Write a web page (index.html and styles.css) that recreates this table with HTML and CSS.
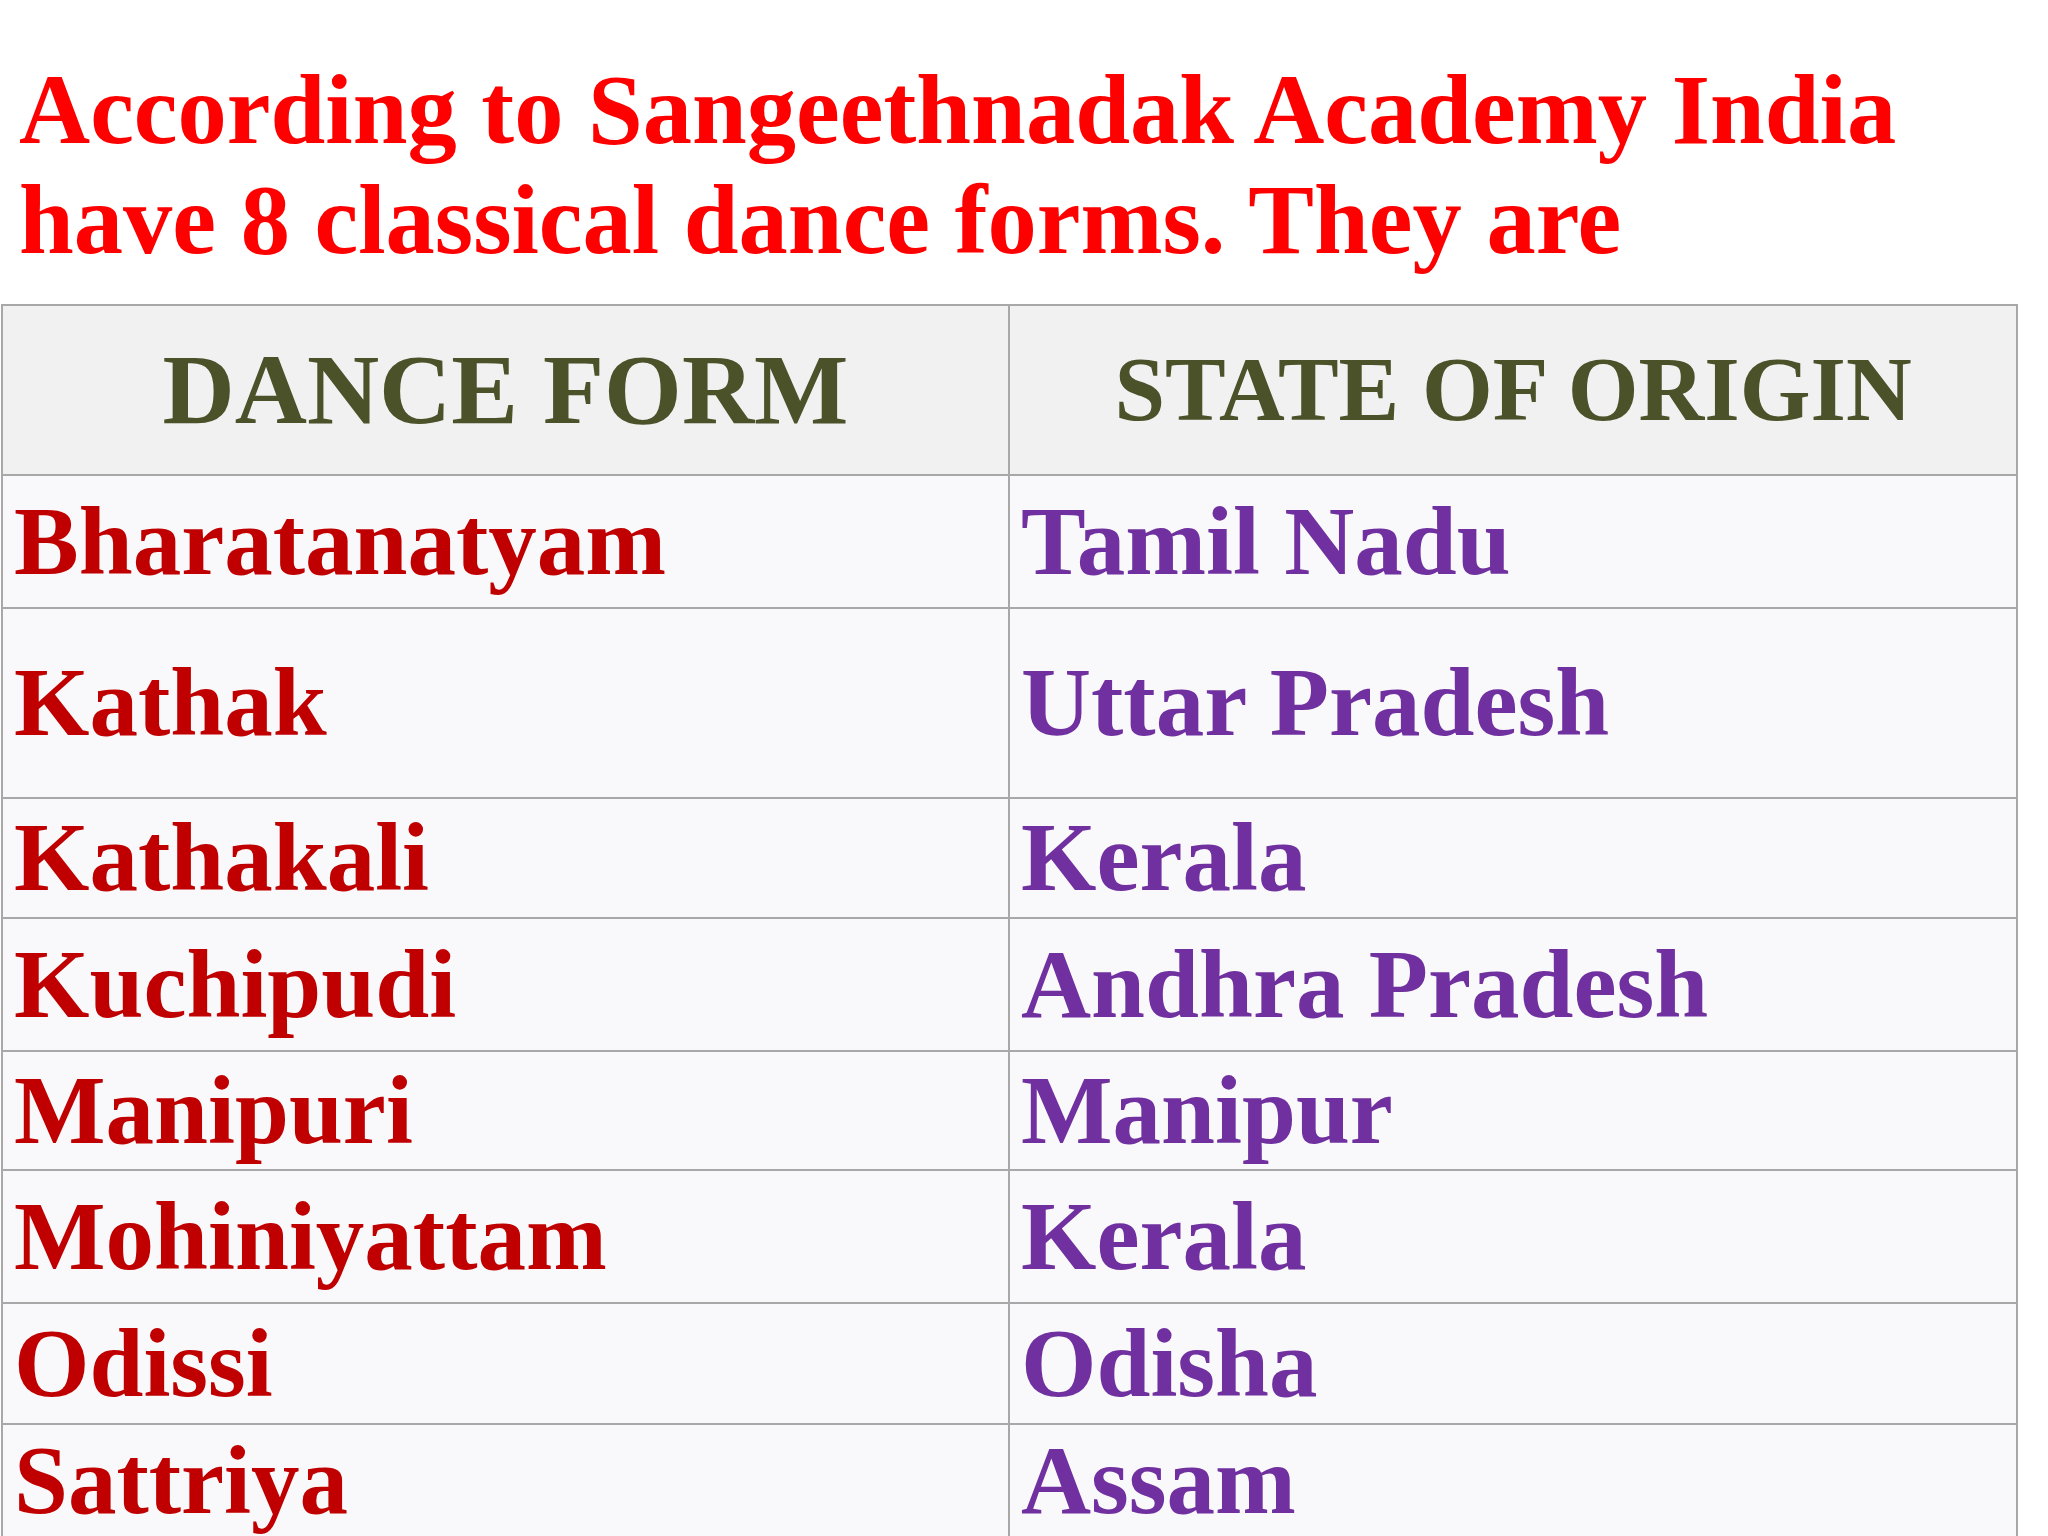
FILE: index.html
```html
<!DOCTYPE html>
<html lang="en">
<head>
<meta charset="utf-8">
<title>Classical Dance Forms of India</title>
<link rel="stylesheet" href="styles.css">
</head>
<body>
<div class="slide">
  <h1 class="title">According to Sangeethnadak Academy India<br>have 8 classical dance forms. They are</h1>
  <table class="dances">
    <colgroup><col class="c1"><col class="c2"></colgroup>
    <thead>
      <tr class="head"><th class="h-form">DANCE FORM</th><th class="h-state">STATE OF ORIGIN</th></tr>
    </thead>
    <tbody>
      <tr class="r1"><td class="form">Bharatanatyam</td><td class="state">Tamil Nadu</td></tr>
      <tr class="r2"><td class="form">Kathak</td><td class="state">Uttar Pradesh</td></tr>
      <tr class="r3"><td class="form">Kathakali</td><td class="state">Kerala</td></tr>
      <tr class="r4"><td class="form">Kuchipudi</td><td class="state">Andhra Pradesh</td></tr>
      <tr class="r5"><td class="form">Manipuri</td><td class="state">Manipur</td></tr>
      <tr class="r6"><td class="form">Mohiniyattam</td><td class="state">Kerala</td></tr>
      <tr class="r7"><td class="form">Odissi</td><td class="state">Odisha</td></tr>
      <tr class="r8"><td class="form">Sattriya</td><td class="state">Assam</td></tr>
    </tbody>
  </table>
</div>
</body>
</html>
```
FILE: styles.css
```css
html, body {
  margin: 0;
  padding: 0;
  background: #ffffff;
}
body {
  font-family: "Liberation Serif", "Times New Roman", serif;
  width: 2048px;
  height: 1536px;
  overflow: hidden;
}
.slide {
  padding-top: 55px;
}
.title {
  margin: 0 0 29px 19px;
  font-size: 98.5px;
  line-height: 110px;
  font-weight: bold;
  color: #ff0000;
  white-space: nowrap;
}
.dances {
  border-collapse: collapse;
  table-layout: fixed;
  width: 2015px;
  margin-left: 1px;
}
.c1 { width: 1007px; }
.c2 { width: 1008px; }
.dances th,
.dances td {
  border: 2px solid #a8a8a8;
  padding: 0 11px;
  vertical-align: middle;
  font-weight: bold;
  white-space: nowrap;
  overflow: hidden;
}
.dances th {
  background: #f2f1f2;
  color: #4b5229;
  line-height: 110px;
  text-align: center;
}
.h-form { font-size: 100px; }
.h-state { font-size: 91px; }
.dances td {
  background: #f9f8fa;
  font-size: 97px;
  line-height: 110px;
  text-align: left;
}
.form { color: #c00000; }
.state { color: #7030a0; }
.head { height: 170px; }
.r1 { height: 133px; }
.r2 { height: 190px; }
.r3 { height: 120px; }
.r4 { height: 133px; }
.r5 { height: 119px; }
.r6 { height: 133px; }
.r7 { height: 121px; }
.r8 { height: 114px; }
```
